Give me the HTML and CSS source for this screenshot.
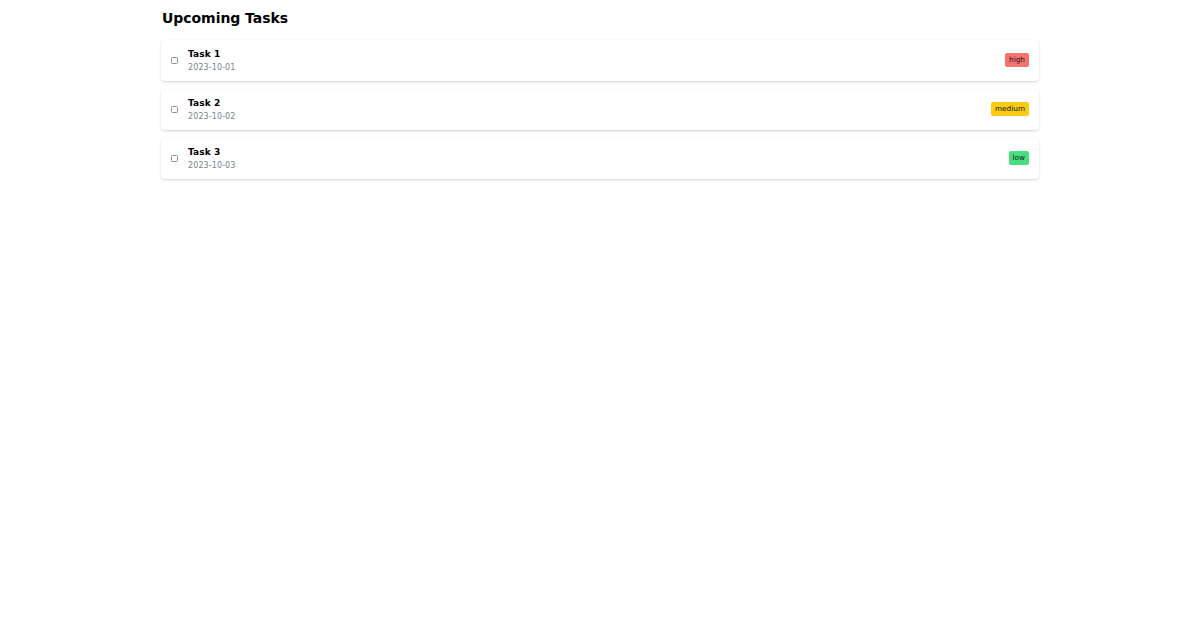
FILE: index.html
```html
<!DOCTYPE html>
<html lang="en">
<head>
<meta charset="utf-8">
<title>Upcoming Tasks</title>
<link rel="stylesheet" href="styles.css">
</head>
<body>

<div class="tasks">
  <h2 class="tasks-title">Upcoming Tasks</h2>

  <ul class="task-list">
    <li class="task">
      <input class="task-check" type="checkbox">
      <div class="task-info">
        <div class="task-name">Task 1</div>
        <div class="task-date">2023-10-01</div>
      </div>
      <span class="badge badge-high">high</span>
    </li>
    <li class="task">
      <input class="task-check" type="checkbox">
      <div class="task-info">
        <div class="task-name">Task 2</div>
        <div class="task-date">2023-10-02</div>
      </div>
      <span class="badge badge-medium">medium</span>
    </li>
    <li class="task">
      <input class="task-check" type="checkbox">
      <div class="task-info">
        <div class="task-name">Task 3</div>
        <div class="task-date">2023-10-03</div>
      </div>
      <span class="badge badge-low">low</span>
    </li>
  </ul>
</div>

</body>
</html>
```

FILE: styles.css
```css
body {
  margin: 0;
  background: #ffffff;
  font-family: "DejaVu Sans", sans-serif;
  color: #000000;
}
.tasks {
  width: 878px;
  margin: 0 auto;
  padding-top: 8px;
}
.tasks-title {
  margin: 0 0 12px 1px;
  font-size: 14px;
  line-height: 20px;
  font-weight: bold;
  letter-spacing: -0.05px;
}
.task-list {
  list-style: none;
  margin: 0;
  padding: 0 0 4px;
  display: flex;
  flex-direction: column;
  gap: 8px;
}
.task {
  display: flex;
  align-items: center;
  height: 41px;
  padding: 0 10px;
  box-sizing: border-box;
  background: #ffffff;
  border-radius: 4px;
  box-shadow: 0 1px 3px rgba(0, 0, 0, 0.12), 0 1px 2px rgba(0, 0, 0, 0.06);
}
.task-check {
  appearance: none;
  -webkit-appearance: none;
  width: 7px;
  height: 7px;
  margin: 0 10px 1px 0;
  border: 1px solid #8f8f8f;
  border-radius: 1.5px;
  background: #ffffff;
  box-sizing: border-box;
}
.task-info {
  flex: 1;
}
.task-name {
  font-size: 9px;
  line-height: 13px;
  font-weight: bold;
  letter-spacing: 0.1px;
}
.task-date {
  margin-top: 1px;
  font-size: 8px;
  line-height: 12px;
  color: #7b818c;
  letter-spacing: 0.1px;
}
.badge {
  margin-bottom: 2px;
  font-size: 7.3px;
  line-height: 14px;
  padding: 0 4px;
  border-radius: 2px;
  color: #111111;
}
.badge-high {
  background: #f87171;
}
.badge-medium {
  background: #facc15;
}
.badge-low {
  background: #4ade80;
}
```
